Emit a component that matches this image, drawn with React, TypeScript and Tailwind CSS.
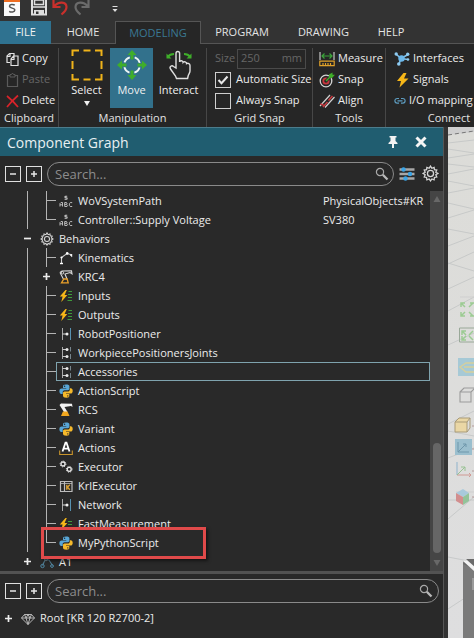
import React from "react";

const FONT = "font-['Open_Sans','Noto_Sans',sans-serif]";

function Svg({ w, h, children, className = "" }: { w: number; h: number; children: React.ReactNode; className?: string }) {
  return (
    <svg width={w} height={h} viewBox={`0 0 ${w} ${h}`} fill="none" aria-hidden="true" className={`shrink-0 ${className}`}>
      {children}
    </svg>
  );
}

/* ---------- tree icons, 14 x 14 ---------- */

const StringIcon = () => (
  <Svg w={14} h={14}>
    <path d="M8.2 2.2H6.6c-.9 0-.9 1.500 0 1.500h.8c1 0 1 1.600 0 1.600H5.600" stroke="#c9c9c9" strokeWidth="1.100" />
    <path d="M1 12.500V9.500l1-1h1.500v4M1 10.800h2.500M5.700 8.500h1.800l.6.500-.5 1.400.8.800-.4 1.300H5.700zM5.700 10.400h2M13.200 8.600h-2l-.8 1v2l.8.900h2" stroke="#b9b9b9" strokeWidth="1" />
  </Svg>
);

function GearIcon({ size = 14 }: { size?: number }) {
  return (
    <svg width={size} height={size} viewBox="0 0 16 16" fill="none" aria-hidden="true" className="shrink-0">
      <path
        d="M8 1l1.300 2.100 2.100-.9.300 2.200 2.200.4-.9 2.100L15 8l-2 1.200.9 2.100-2.200.4-.3 2.200-2.100-.8L8 15l-1.300-1.900-2.100.8-.3-2.200-2.200-.4.900-2.100L1 8l2-1.100-.9-2.100 2.200-.4.3-2.200 2.100.9z"
        stroke="#d6d6d6"
        strokeWidth="1.200"
      />
      <circle cx="8" cy="8" r="2.900" stroke="#d6d6d6" strokeWidth="1.200" />
    </svg>
  );
}

const KinematicsIcon = () => (
  <Svg w={14} h={14}>
    <path d="M2.500 12V6.500L8 2.500l3.500 1L13 6" stroke="#d0d0d0" strokeWidth="1.100" />
    <path d="M1 12.500h3" stroke="#fff" strokeWidth="1.400" />
    <circle cx="2.500" cy="6.500" r="1.100" fill="#fff" />
    <circle cx="8.200" cy="2.400" r="1.300" fill="#fff" />
    <circle cx="12.300" cy="4" r="1.100" fill="#fff" />
  </Svg>
);

const RobotOutlineIcon = () => (
  <Svg w={14} h={14}>
    <path d="M1 2.500L3 1l9.500-.2.500 3-2-1.300L6 4l2 5M1 2.500l3.500 6.700" stroke="#d8d8d8" strokeWidth="1.100" />
    <circle cx="3.500" cy="2.800" r="1.200" stroke="#d8d8d8" />
    <path d="M4.800 9h3.400l1 3.800H2.500z" stroke="#e9a02a" strokeWidth="1.300" />
  </Svg>
);

const RobotIcon = () => (
  <Svg w={14} h={14}>
    <path d="M.5 2L2 .5 13 .7l.5 3.300-1.500-1L5.500 4l3 5H5z" fill="#f2f2f2" />
    <path d="M4 8.500h4.500L10.500 13H2z" fill="#f3a81f" />
  </Svg>
);

const BoltListIcon = ({ short }: { short?: boolean }) => (
  <Svg w={14} h={14}>
    <path d="M6.500 1L.8 7.500h2.800L2.300 13 8.300 6H5.600L7.800 1z" fill="#f7b718" />
    <path d={short ? "M9 4.500h4M9 7.500h4" : "M9.500 2.500H13M9 5.500h4M9 8.500h4M8.500 11.500H13"} stroke="#3f9a3c" strokeWidth="1.200" />
  </Svg>
);

const PortIcon = () => (
  <Svg w={14} h={14}>
    <path d="M3.500 1v12" stroke="#a9a9a9" />
    <path d="M3.500 7H8" stroke="#d8d8d8" />
    <circle cx="8" cy="7" r="1.500" fill="#f0f0f0" />
    <path d="M11.500 1v12" stroke="#5791b1" />
  </Svg>
);

const MultiPortIcon = () => (
  <Svg w={14} h={14}>
    <path d="M3.500 1v12" stroke="#a9a9a9" />
    <path d="M3.500 3.500H8M3.500 10.500H8" stroke="#c8c8c8" />
    <circle cx="8" cy="3.500" r="1.500" fill="#e8e8e8" />
    <circle cx="8" cy="10.500" r="1.500" fill="#e8e8e8" />
    <path d="M11.500 1v4.500M11.500 8v5" stroke="#77858d" />
  </Svg>
);

const PythonIcon = () => (
  <Svg w={14} h={14}>
    <path d="M7 .4C4.500.4 4 1.300 4 2.400V4h3.300v.6H2.600C1.100 4.600.4 5.700.4 7.200s.7 2.700 2 2.700h1.300V8.200C3.700 7 4.600 6.300 5.700 6.300h3.100c1 0 1.600-.7 1.600-1.700V2.300C10.400 1 9.300.4 7 .4z" fill="#58a6d6" />
    <path d="M7.300 13.700c2.500 0 3-.9 3-2V10.100H7v-.6h4.600c1.400 0 2.100-1.100 2.100-2.600s-.7-2.600-2-2.600h-.9V5.600C10.800 7 9.800 7.600 8.700 7.600H5.600C4.600 7.600 4 8.300 4 9.400v2.400c0 1.200 1.100 1.900 3.300 1.900z" fill="#f5b92b" />
    <circle cx="5.600" cy="2.200" r=".7" fill="#262626" />
    <circle cx="8.800" cy="11.900" r=".7" fill="#262626" />
  </Svg>
);

const ActionsIcon = () => (
  <Svg w={14} h={14}>
    <path d="M.7 9.500v4h12.600v-4" stroke="#c9952c" strokeWidth="1.100" />
    <path d="M3.500 10.500L6.500 1.700h1L10.500 10.500M4.800 7.600h4.500" stroke="#fff" strokeWidth="1.800" />
  </Svg>
);

const ExecutorIcon = () => (
  <Svg w={14} h={14}>
    <circle cx="4" cy="4" r="2" stroke="#e6e6e6" strokeWidth="1.300" />
    <circle cx="4" cy="4" r="2.900" stroke="#e6e6e6" strokeWidth="1" strokeDasharray="1.140 1.140" />
    <circle cx="10.200" cy="9.300" r="2" stroke="#e6e6e6" strokeWidth="1.300" />
    <circle cx="10.200" cy="9.300" r="2.900" stroke="#e6e6e6" strokeWidth="1" strokeDasharray="1.140 1.140" />
  </Svg>
);

const KrlIcon = () => (
  <Svg w={14} h={14}>
    <path d="M1.500 2.500h11.500v10H1.500zM5.500 2.500v10" stroke="#bcbcbc" strokeWidth="1.200" />
    <path d="M2 4.500h11" stroke="#bcbcbc" strokeWidth=".8" />
    <path d="M7.800 5.800v5M10.800 5.800L8.500 8.300l2.300 2.500" stroke="#d7a035" strokeWidth="1.400" />
  </Svg>
);

const LinkNodeIcon = () => (
  <Svg w={14} h={14}>
    <path d="M2.500 10.500L5 5h4l3.500 5.500" stroke="#557f95" strokeWidth="1.100" />
    <circle cx="2.500" cy="11" r="1.700" stroke="#4f88a5" />
    <circle cx="6" cy="4.500" r="1.300" stroke="#7d8c94" />
    <circle cx="12" cy="11" r="1.400" stroke="#4f88a5" />
  </Svg>
);

const DiamondIcon = () => (
  <Svg w={14} h={14}>
    <path d="M3.500 2.500h7l3 3.500L7 12.500.5 6zM.5 6h13M3.500 2.500L5 6l2 6.500L9 6l1.500-3.500M7 2.500L5 6M7 2.500L9 6" stroke="#c4c4c4" strokeWidth=".9" />
  </Svg>
);

/* ---------- toolbar icons ---------- */

const CopyIcon = () => (
  <Svg w={13} h={16}>
    <path d="M4 11.500H1V5l2.500-2.500H8V5" stroke="#e2e2e2" strokeWidth="1.200" />
    <path d="M1 5.500h3V2.500M5 14.500V8l2.500-3H12v9.500zM5 8.500h3V5" stroke="#e2e2e2" strokeWidth="1.200" />
  </Svg>
);

const PasteIcon = () => (
  <Svg w={13} h={16}>
    <path d="M1.500 3.500h10v11h-10z" stroke="#5b5b5b" strokeWidth="1.200" />
    <path d="M4 5V2.500h1.500L6.500 1l1 1.500H9V5z" fill="#262626" stroke="#5b5b5b" />
  </Svg>
);

const DeleteIcon = () => (
  <Svg w={13} h={16}>
    <path d="M1 3c3 2.500 7.500 6.500 11 11M12 2.500C8 6 4.500 9.500 1 14" stroke="#d8232a" strokeWidth="1.700" />
  </Svg>
);

const MarqueeIcon = () => (
  <Svg w={32} h={32}>
    <path
      d="M1.500 7V1.500H8M12.500 1.500h7M24 1.500h6.500V7M30.500 12v8M30.500 25v5.500H24M19.500 30.500h-7M8 30.500H1.500V25M1.500 20v-8"
      stroke="#f0b31a"
      strokeWidth="2"
    />
  </Svg>
);

const MoveIcon = () => (
  <Svg w={32} h={32}>
    <circle cx="16" cy="16" r="8" stroke="#eef6f6" strokeWidth="1.800" strokeDasharray="7.570 5" strokeDashoffset="-2.500" />
    <path
      d="M16 1l4.500 5h-3v4.500h-3V6h-3zM16 31l4.500-5h-3v-4.500h-3V26h-3zM1 16l5-4.500v3h4.500v3H6v3zM31 16l-5-4.500v3h-4.500v3H26v3z"
      fill="#3fae2a"
    />
  </Svg>
);

const TouchIcon = () => (
  <Svg w={32} h={32}>
    <path d="M4.500 8C6.500 5.500 8.500 5 11 5M27.500 8C25.500 5.500 23.500 5 21 5" stroke="#3fae2a" strokeWidth="2.200" />
    <path d="M3.500 4.500V9.500H8.500zM28.500 4.500V9.500H23.500z" fill="#3fae2a" />
    <path
      d="M13 19V4.500c0-2.600 3.600-2.600 3.600 0V13c.3-2 3.300-1.600 3.500.4 1-1.300 3.500-.7 3.500 1.200 1.500-.8 3.400 0 3.400 2v5.400c0 2-1.600 3.300-2 5.500l-.4 2H13.500l-1-2.500-5-7c-1.500-2.500 1.300-4 3-2.500z"
      fill="#262626"
      stroke="#dfdfdf"
      strokeWidth="1.400"
    />
  </Svg>
);

const MeasureIcon = () => (
  <Svg w={16} h={16}>
    <path d="M1 1v8M15 1v8" stroke="#d2d2d2" strokeWidth="1.100" />
    <path d="M3 5h10M5.500 2.500L3 5l2.500 2.500M10.500 2.500L13 5l-2.500 2.500" stroke="#3ba53a" strokeWidth="1.200" />
    <path d="M.8 10.200h14.400v4.500H.8zM4 12v2.500M6.500 12v2.500M9 12v2.500M11.500 12v2.500" stroke="#dfa12a" strokeWidth="1.200" />
  </Svg>
);

const SnapIcon = () => (
  <Svg w={16} h={16}>
    <circle cx="7" cy="9" r="5.800" stroke="#d5d5d5" strokeWidth="1.300" />
    <circle cx="7" cy="9" r="2.700" stroke="#c9383e" strokeWidth="1.800" />
    <path d="M8 8l4-4" stroke="#262626" strokeWidth="3" />
    <path d="M7 9l5-5" stroke="#3fae2a" strokeWidth="1.400" />
    <path d="M10 5.500V2.500L13.500.5v2.300H16L13 6z" fill="#3fae2a" />
  </Svg>
);

const AlignIcon = () => (
  <Svg w={16} h={16}>
    <path d="M1 13L11 2M6 14.500L15.500 4" stroke="#d0d0d0" strokeWidth="1.200" />
    <path d="M1.500 11l3 1M4 14L8.500 9M9.500 7.500L13.500 3" stroke="#c9383e" strokeWidth="1.500" />
  </Svg>
);

const InterfacesIcon = () => (
  <Svg w={16} h={16}>
    <path d="M2 3l5 4.500 7-4M7 7.500L5 13M7 7.500l7 1" stroke="#7fc0ea" strokeWidth="1.600" />
    <circle cx="7.500" cy="7.500" r="3.200" fill="#6cb8ea" />
    <circle cx="2.200" cy="3" r="1.700" fill="#8ecaf0" />
    <circle cx="13.700" cy="3.200" r="1.700" fill="#8ecaf0" />
    <circle cx="4.800" cy="13" r="1.800" fill="#8ecaf0" />
    <circle cx="14" cy="8.500" r="1.300" fill="#8ecaf0" />
  </Svg>
);

const BoltIcon = () => (
  <Svg w={16} h={16}>
    <path d="M9.500 1L3 9h4L5.500 15.500 14.500 6.500H10L12.500 1z" fill="#f7b718" />
  </Svg>
);

const ChainIcon = () => (
  <Svg w={12} h={16}>
    <path d="M5 5.500H3.200a2.300 2.300 0 000 4.600H5M7 5.500h1.800a2.300 2.300 0 010 4.600H7M3.500 7.800h5" stroke="#5d9cc0" strokeWidth="1.200" />
  </Svg>
);

const SearchIcon = () => (
  <Svg w={14} h={14}>
    <circle cx="5" cy="5" r="3.600" stroke="#a9a9a9" strokeWidth="1.200" />
    <path d="M7.800 7.800l4.700 4.700" stroke="#b9b9b9" strokeWidth="2.300" />
  </Svg>
);

const SlidersIcon = () => (
  <Svg w={16} h={14}>
    <path d="M.5 2.500h15M.5 7h15M.5 11.500h15" stroke="#a8a8a8" strokeWidth="2.400" />
    <circle cx="4.500" cy="2.500" r="2.200" fill="#3ba4e6" />
    <circle cx="11" cy="7" r="2.200" fill="#3ba4e6" />
    <circle cx="6.500" cy="11.500" r="2.200" fill="#3ba4e6" />
  </Svg>
);

/* ---------- building blocks ---------- */

function ToolButton({ icon, label, muted }: { icon: React.ReactNode; label: string; muted?: boolean }) {
  return (
    <button type="button" disabled={muted} className={`flex h-[21px] items-center gap-[3px] whitespace-nowrap ${muted ? "text-[#666]" : "text-[#ececec]"}`}>
      {icon}
      <span>{label}</span>
    </button>
  );
}

function Group({ title, width, children, last }: { title: string; width: string; children: React.ReactNode; last?: boolean }) {
  return (
    <section aria-label={title} className={`flex shrink-0 flex-col ${width} ${last ? "" : "border-r border-[#474747]"}`}>
      <div className="h-[62px] shrink-0">{children}</div>
      <div className="text-center leading-4 text-[#e4e4e4]">{title}</div>
    </section>
  );
}

function SquareToggle({ sign }: { sign: "minus" | "plus" }) {
  return (
    <button
      type="button"
      aria-label={sign === "minus" ? "Collapse all" : "Expand all"}
      className="flex size-4 shrink-0 items-center justify-center border border-[#e0e0e0]"
    >
      <Svg w={8} h={8}>
        <path d={sign === "minus" ? "M1 4h6" : "M1 4h6M4 1v6"} stroke="#e6e6e6" strokeWidth="1.500" />
      </Svg>
    </button>
  );
}

function SearchBox({ label, className }: { label: string; className: string }) {
  return (
    <label className={`flex h-6 flex-1 items-center rounded-full border border-[#8a8a8a] pl-[7px] ${className}`}>
      <input
        type="text"
        aria-label={label}
        placeholder="Search..."
        className="min-w-0 flex-1 bg-transparent text-[13px] leading-5 text-[#ddd] outline-none placeholder:text-[#8d8d8d]"
      />
      <SearchIcon />
    </label>
  );
}

function Expander({ sign, label }: { sign: "minus" | "plus"; label: string }) {
  return (
    <button type="button" aria-label={label} className="flex size-[9px] shrink-0 items-center justify-center">
      <Svg w={9} h={9}>
        <path d={sign === "minus" ? "M1 4.500h7" : "M1 4.500h7M4.500 1v7"} stroke="#ededed" strokeWidth="1.700" />
      </Svg>
    </button>
  );
}

type Node = {
  label: string;
  icon: React.ReactNode;
  value?: string;
  end?: boolean;
  expandable?: boolean;
  selected?: boolean;
  marked?: boolean;
};

function Leaf({ label, icon, value, end, expandable, selected, marked }: Node) {
  return (
    <li role="treeitem" aria-selected={!!selected} className="relative flex h-[19px]">
      <span className="w-7 shrink-0 border-r border-[#b4b4b4]" />
      {expandable ? (
        <span className="flex w-7 shrink-0 items-center pl-[14px]">
          <Expander sign="plus" label={`Expand ${label}`} />
        </span>
      ) : (
        <span className="flex w-7 shrink-0 flex-col pl-[18px]">
          <span className="h-[10px] border-b border-l border-[#b4b4b4]" />
          {!end && <span className="flex-1 border-l border-[#b4b4b4]" />}
        </span>
      )}
      <span className={`flex flex-1 items-center gap-[5px] border pl-[2px] ${selected ? "border-[#7fa3ae]" : "border-transparent"}`}>
        {icon}
        <span className="flex-1 whitespace-nowrap">{label}</span>
        {value && <span className="w-[106px] overflow-hidden whitespace-nowrap">{value}</span>}
      </span>
      {marked && <span className="absolute -top-[6px] left-[41px] h-8 w-[165px] border-[3px] border-[#e04a4a] shadow-[2px_2px_3px_rgba(0,0,0,0.5)]" />}
    </li>
  );
}

function Branch({ label, icon, sign }: { label: string; icon: React.ReactNode; sign: "minus" | "plus" }) {
  return (
    <li role="treeitem" aria-selected={false} aria-expanded={sign === "minus"} className="flex h-[19px] items-center pl-[23px]">
      <Expander sign={sign} label={`Toggle ${label}`} />
      <span className="ml-2 flex items-center gap-[5px]">
        {icon}
        <span>{label}</span>
      </span>
    </li>
  );
}

const PROPERTIES: Node[] = [
  { label: "WoVSystemPath", icon: <StringIcon />, value: "PhysicalObjects#KR" },
  { label: "Controller::Supply Voltage", icon: <StringIcon />, value: "SV380", end: true },
];

const BEHAVIORS: Node[] = [
  { label: "Kinematics", icon: <KinematicsIcon /> },
  { label: "KRC4", icon: <RobotOutlineIcon />, expandable: true },
  { label: "Inputs", icon: <BoltListIcon /> },
  { label: "Outputs", icon: <BoltListIcon /> },
  { label: "RobotPositioner", icon: <PortIcon /> },
  { label: "WorkpiecePositionersJoints", icon: <MultiPortIcon /> },
  { label: "Accessories", icon: <MultiPortIcon />, selected: true },
  { label: "ActionScript", icon: <PythonIcon /> },
  { label: "RCS", icon: <RobotIcon /> },
  { label: "Variant", icon: <PythonIcon /> },
  { label: "Actions", icon: <ActionsIcon /> },
  { label: "Executor", icon: <ExecutorIcon /> },
  { label: "KrlExecutor", icon: <KrlIcon /> },
  { label: "Network", icon: <PortIcon /> },
  { label: "FastMeasurement", icon: <BoltListIcon short /> },
  { label: "MyPythonScript", icon: <PythonIcon />, end: true, marked: true },
];

function TitleBar() {
  return (
    <header className="flex h-[21px] items-start bg-[#333]">
      <Svg w={16} h={16} className="ml-1">
        <path d="M0 0h16v16H0z" fill="#fbfbfb" />
        <path d="M0 0h16v2H0z" fill="#ee6d22" />
        <path d="M10.800 5.200C9 4 5.500 4.300 5.500 6.300c0 2.300 5.300 1.300 5.300 3.800 0 2.200-3.800 2.400-5.600 1.200" stroke="#555" strokeWidth="1.500" />
      </Svg>
      <button type="button" aria-label="Save" className="ml-[11px]">
        <Svg w={16} h={16}>
          <path d="M1 0v14.500h14V0" stroke="#dedede" strokeWidth="2" />
          <path d="M1 7h14M3.500 0h9v4.500h-9z" stroke="#dedede" strokeWidth="1.500" />
          <path d="M3 10h10v5H3z" fill="#dedede" />
          <path d="M5 11.500h2.500V14H5z" fill="#333" />
        </Svg>
      </button>
      <button type="button" aria-label="Undo" className="ml-[5px]">
        <Svg w={17} h={16}>
          <path d="M2.500 6C6 1.500 14.500 1 14.500 7c0 3.500-2.500 5.500-5 7.500M1.500 0v7H8.500" stroke="#c9302c" strokeWidth="2.200" />
        </Svg>
      </button>
      <button type="button" aria-label="Redo" className="ml-[4px]">
        <Svg w={17} h={16}>
          <path d="M14.500 6C11 1.500 2.500 1 2.500 7c0 3.500 2.500 5.500 5 7.500M15.500 0v7H8.500" stroke="#6b6b6b" strokeWidth="2.200" />
        </Svg>
      </button>
      <button type="button" aria-label="Customize toolbar" className="ml-[21px] mt-[5px]">
        <Svg w={8} h={9}>
          <path d="M1.500 1.500h5" stroke="#e0e0e0" />
          <path d="M1.500 4h5L4 7z" fill="#e0e0e0" />
        </Svg>
      </button>
    </header>
  );
}

function Tabs() {
  const idle = "border-b border-[#555] text-[#e4e4e4]";
  return (
    <nav className="flex h-[23px] bg-[#333] text-[11px]">
      <button type="button" className="w-[51px] bg-[#2f7290] text-[#f3f3f3]">FILE</button>
      <button type="button" className={`w-16 ${idle}`}>HOME</button>
      <button type="button" className="w-[86px] border-x border-t border-[#555] bg-[#262626] text-[#3a7893]">MODELING</button>
      <button type="button" className={`w-[82px] ${idle}`}>PROGRAM</button>
      <button type="button" className={`w-[81px] ${idle}`}>DRAWING</button>
      <button type="button" className={`w-[54px] ${idle}`}>HELP</button>
      <span className="flex-1 border-b border-[#555]" />
    </nav>
  );
}

function Checkbox({ label, checked }: { label: string; checked?: boolean }) {
  return (
    <label className="flex h-[21px] items-center gap-[5px] whitespace-nowrap text-[#ececec]">
      <span className="grid size-4 place-items-center">
        <input type="checkbox" defaultChecked={checked} className="peer col-start-1 row-start-1 size-4 appearance-none border border-[#cfcfcf]" />
        <svg width="12" height="12" viewBox="0 0 12 12" fill="none" aria-hidden="true" className="pointer-events-none invisible col-start-1 row-start-1 peer-checked:visible">
          <path d="M1.500 6l3 3.200L10.500 2.500" stroke="#e8e8e8" strokeWidth="2" />
        </svg>
      </span>
      {label}
    </label>
  );
}

function Ribbon() {
  return (
    <div className="flex h-[83px] overflow-hidden bg-[#262626] pt-1">
      <Group title="Clipboard" width="w-[59px]">
        <div className="pl-[6px]">
          <ToolButton icon={<CopyIcon />} label="Copy" />
          <ToolButton icon={<PasteIcon />} label="Paste" muted />
          <ToolButton icon={<DeleteIcon />} label="Delete" />
        </div>
      </Group>
      <Group title="Manipulation" width="w-[148px]">
        <div className="flex pl-[6px] text-[#f0f0f0]">
          <button type="button" className="flex h-[60px] w-[43px] flex-col items-center pt-px">
            <MarqueeIcon />
            <span className="mt-px leading-4">Select</span>
            <Svg w={8} h={6} className="mt-[3px]">
              <path d="M1 0h6L4 5z" fill="#f0f0f0" />
            </Svg>
          </button>
          <button type="button" className="ml-[2px] flex h-[60px] w-[43px] flex-col items-center bg-[#32718c] pt-px">
            <MoveIcon />
            <span className="mt-px leading-4">Move</span>
          </button>
          <button type="button" className="ml-1 flex h-[60px] w-[43px] flex-col items-center pt-px">
            <TouchIcon />
            <span className="mt-px leading-4">Interact</span>
          </button>
        </div>
      </Group>
      <Group title="Grid Snap" width="w-[106px]">
        <div className="pl-2">
          <div className="flex h-[21px] items-center text-[#666]">
            <label htmlFor="grid-size" className="w-[22px]">Size</label>
            <span className="flex h-5 w-[69px] items-center border border-[#4a4a4a] px-[3px]">
              <input id="grid-size" defaultValue="250" disabled className="min-w-0 flex-1 bg-transparent" />
              <span>mm</span>
            </span>
          </div>
          <Checkbox label="Automatic Size" checked />
          <Checkbox label="Always Snap" />
        </div>
      </Group>
      <Group title="Tools" width="w-[73px]">
        <div className="pl-[6px]">
          <ToolButton icon={<MeasureIcon />} label="Measure" />
          <ToolButton icon={<SnapIcon />} label="Snap" />
          <ToolButton icon={<AlignIcon />} label="Align" />
        </div>
      </Group>
      <Group title="Connect" width="w-[126px]" last>
        <div className="pl-2">
          <ToolButton icon={<InterfacesIcon />} label="Interfaces" />
          <ToolButton icon={<BoltIcon />} label="Signals" />
          <ToolButton icon={<ChainIcon />} label="I/O mapping" />
        </div>
      </Group>
    </div>
  );
}

function ScrollBar() {
  return (
    <div aria-hidden="true" className="flex w-[13px] shrink-0 flex-col items-center bg-[#454545] py-[5px]">
      <Svg w={8} h={7}>
        <path d="M4 0l3.500 6h-7z" fill="#686868" />
      </Svg>
      <span className="mt-[240px] h-[110px] w-2 rounded-full bg-[#666]" />
      <Svg w={8} h={7} className="mt-auto">
        <path d="M4 7L.5 1h7z" fill="#686868" />
      </Svg>
    </div>
  );
}

function GraphPanel() {
  return (
    <div className="flex min-w-0 flex-1 flex-col border-r border-[#555] bg-[#292929]">
      <div className="flex h-[29px] items-center border-t border-[#4c7c8c] bg-[#205d70] pl-[7px] pr-4">
        <h2 className="flex-1 text-[14px] text-[#e8f0f2]">Component Graph</h2>
        <button type="button" aria-label="Pin panel" className="mr-[17px]">
          <Svg w={10} h={12}>
            <path d="M1.500 0h7v1.500h-1V5l2 2v1H6v4H4V8H.5V7l2-2V1.500h-1z" fill="#f2f2f2" />
          </Svg>
        </button>
        <button type="button" aria-label="Close panel">
          <Svg w={12} h={12}>
            <path d="M1.500 1.500l9 9M10.500 1.500l-9 9" stroke="#f5f5f5" strokeWidth="3" />
          </Svg>
        </button>
      </div>

      <div className="flex h-[35px] items-center pl-[5px] pr-1">
        <SquareToggle sign="minus" />
        <span className="w-[5px]" />
        <SquareToggle sign="plus" />
        <SearchBox label="Search component graph" className="ml-[5px] mr-[5px] pr-1" />
        <button type="button" aria-label="Filter">
          <SlidersIcon />
        </button>
        <button type="button" aria-label="Settings" className="ml-[7px]">
          <GearIcon size={17} />
        </button>
      </div>

      <div className="flex">
        <ul role="tree" aria-label="Component graph" className="min-w-0 flex-1 text-[11px] leading-4 text-[#ececec]">
          {PROPERTIES.map((n) => (
            <Leaf key={n.label} {...n} />
          ))}
          <Branch label="Behaviors" icon={<GearIcon />} sign="minus" />
          {BEHAVIORS.map((n) => (
            <Leaf key={n.label} {...n} />
          ))}
          <Branch label="A1" icon={<LinkNodeIcon />} sign="plus" />
        </ul>
        <ScrollBar />
      </div>

      <div className="h-[3px] bg-[#525252]" />

      <div className="flex h-[34px] items-center pl-[5px] pr-1">
        <SquareToggle sign="minus" />
        <span className="w-[5px]" />
        <SquareToggle sign="plus" />
        <SearchBox label="Search nodes" className="ml-[5px] pr-[5px]" />
      </div>
      <ul role="tree" aria-label="Nodes" className="flex-1 text-[11px] text-[#ececec]">
        <li role="treeitem" aria-selected={false} className="flex h-[21px] items-center pl-1">
          <Expander sign="plus" label="Expand Root" />
          <span className="ml-2 flex items-center gap-[5px]">
            <DiamondIcon />
            <span>Root [KR 120 R2700-2]</span>
          </span>
        </li>
      </ul>
    </div>
  );
}

function Viewport() {
  return (
    <div className="w-[26px] shrink-0 overflow-hidden bg-gradient-to-b from-[#dcdcd8] to-[#dededf]">
      <Svg w={26} h={511}>
        <path d="M0 0h26v5L0 8z" fill="#cfcfcf" />
        <path d="M0 8l26-4" stroke="#777" strokeDasharray="4 3" />
        <path
          d="M0 16l26-3M0 22l26 4M0 31l26-4M0 37l26 3M0 47l26-5M0 54l26 5M0 66l26-5M0 76l26 6M0 91l26-8M0 102l26 5M0 119l26-10M0 136l26 8M0 137l26-12M0 162l26-12M0 184l26-14M0 218l26-12M0 297l26-13M0 304l26 5M0 331l26-10M0 392l26-22M0 373h26M0 430l26 5M0 482l26-17"
          stroke="#c2c4c4"
          strokeWidth=".8"
        />
        <path d="M12 170h14M8 365h18" stroke="#cfcfcf" />
        <g stroke="#9ccb93" strokeWidth="1.500">
          <path d="M13 180v-4h4M13 176l4 4M25 176l-4 4M26 176h-4M13 185v4h4M13 189l4-4M26 189h-4M25 189l-4-4" />
          <path d="M14 208v-4h4M14 204l4 4M25 204l-4 4M14 209v4h4M14 213l4-4M25 213l-4-4" />
        </g>
        <path d="M27 201H11.500v14H27" stroke="#99a898" />
        <path d="M10 231h16v18H10z" fill="#a6c9d6" />
        <path d="M26 236h-8l-6 4 6 5h8M16 240h10" stroke="#d6cf9c" strokeWidth="1.400" />
        <path d="M12 265l4-4h11M12 265h11v10H12zM23 265l4-4" stroke="#9b9b9b" strokeWidth="1.100" />
        <path d="M7 295l4-4h11l-3 4v10H7z" fill="#ead7a5" />
        <path d="M7 295l4-4h11v10l-3 4H7zM7 295h12v10M19 295l3-4" stroke="#a99b78" />
        <path d="M7 312h17v16H7z" fill="#9bbfce" />
        <path d="M10 315v10h11M10 325l8-8M15 317h3v3" stroke="#6f97ab" />
        <path d="M9 335v13" stroke="#8fb3cc" />
        <path d="M9 348h14M21 346l2 2-2 2" stroke="#d09a94" />
        <path d="M9 348l8-8M13 340h4v4" stroke="#98c293" />
        <path d="M8 366l7-4 6 4-6 4z" fill="#a8c9dc" />
        <path d="M8 366l7 4v8l-7-4z" fill="#d28e8e" />
        <path d="M21 366l-6 4v8l6-4z" fill="#93c39a" />
        <path d="M24 322h2M24 344h2M24 370h2M24 299h2" stroke="#b59a9a" />
        <path d="M15 434l11 8v69H15z" fill="#7a7a7a" />
        <path d="M15 437l4-5h7v10z" fill="#6a6a6a" />
        <path d="M15 434l4-1 8 7v5z" fill="#f2f2f2" />
        <path d="M24 451h2v12h-2z" fill="#9b9b9b" />
      </Svg>
    </div>
  );
}

export default function App() {
  return (
    <div className={`flex min-h-screen flex-col overflow-hidden bg-[#292929] text-[11px] ${FONT}`}>
      <TitleBar />
      <Tabs />
      <Ribbon />
      <main className="flex flex-1">
        <GraphPanel />
        <div className="w-1 shrink-0 bg-[#333]" />
        <Viewport />
      </main>
    </div>
  );
}
